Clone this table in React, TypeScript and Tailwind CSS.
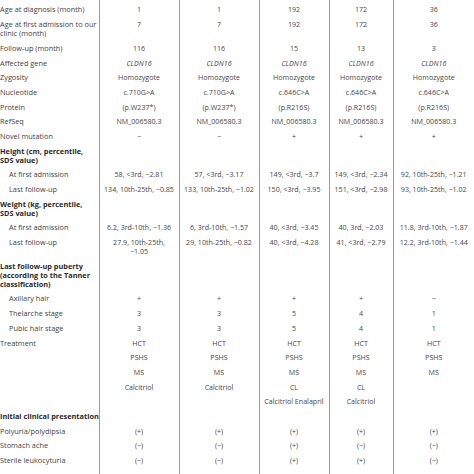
import type { ReactNode } from 'react'

interface IRow {
  label: ReactNode
  bold?: boolean
  indent?: boolean
  values: ReactNode[]
}

const empty = ['', '', '', '', '']

const rows: IRow[] = [
  { label: 'Age at diagnosis (month)', values: ['1', '1', '192', '172', '36'] },
  {
    label: (
      <>
        Age at first admission to our
        <br />
        clinic (month)
      </>
    ),
    values: ['7', '7', '192', '172', '36'],
  },
  { label: 'Follow-up (month)', values: ['116', '116', '15', '13', '3'] },
  {
    label: 'Affected gene',
    values: Array(5).fill(<i>CLDN16</i>),
  },
  { label: 'Zygosity', values: Array(5).fill('Homozygote') },
  {
    label: 'Nucleotide',
    values: ['c.710G>A', 'c.710G>A', 'c.646C>A', 'c.646C>A', 'c.646C>A'],
  },
  {
    label: 'Protein',
    values: ['(p.W237*)', '(p.W237*)', '(p.R216S)', '(p.R216S)', '(p.R216S)'],
  },
  { label: 'RefSeq', values: Array(5).fill('NM_006580.3') },
  { label: 'Novel mutation', values: ['\u2212', '\u2212', '+', '+', '+'] },
  {
    label: (
      <>
        Height (cm, percentile,
        <br />
        SDS value)
      </>
    ),
    bold: true,
    values: empty,
  },
  {
    label: 'At first admission',
    indent: true,
    values: [
      '58, <3rd, \u22122.81',
      '57, <3rd, \u22123.17',
      '149, <3rd, \u22123.7',
      '149, <3rd, \u22122.34',
      '92, 10th-25th, \u22121.21',
    ],
  },
  {
    label: 'Last follow-up',
    indent: true,
    values: [
      '134, 10th-25th, \u22120.85',
      '133, 10th-25th, \u22121.02',
      '150, <3rd, \u22123.95',
      '151, <3rd, \u22122.98',
      '93, 10th-25th, \u22121.02',
    ],
  },
  {
    label: (
      <>
        Weight (kg, percentile,
        <br />
        SDS value)
      </>
    ),
    bold: true,
    values: empty,
  },
  {
    label: 'At first admission',
    indent: true,
    values: [
      '6.2, 3rd-10th, \u22121.36',
      '6, 3rd-10th, \u22121.57',
      '40, <3rd, \u22123.45',
      '40, 3rd, \u22122.03',
      '11.8, 3rd-10th, \u22121.87',
    ],
  },
  {
    label: 'Last follow-up',
    indent: true,
    values: [
      <>
        27.9, 10th-25th,
        <br />
        {'\u22121.05'}
      </>,
      '29, 10th-25th, \u22120.82',
      '40, <3rd, \u22124.28',
      '41, <3rd, \u22122.79',
      '12.2, 3rd-10th, \u22121.44',
    ],
  },
  {
    label: (
      <>
        Last follow-up puberty
        <br />
        (according to the Tanner
        <br />
        classification)
      </>
    ),
    bold: true,
    values: empty,
  },
  { label: 'Axillary hair', indent: true, values: ['+', '+', '+', '+', '\u2212'] },
  { label: 'Thelarche stage', indent: true, values: ['3', '3', '5', '4', '1'] },
  { label: 'Pubic hair stage', indent: true, values: ['3', '3', '5', '4', '1'] },
  { label: 'Treatment', values: Array(5).fill('HCT') },
  { label: '', values: Array(5).fill('PSHS') },
  { label: '', values: Array(5).fill('MS') },
  { label: '', values: ['Calcitriol', 'Calcitriol', 'CL', 'CL', ''] },
  { label: '', values: ['', '', 'Calcitriol Enalapril', 'Calcitriol', ''] },
  { label: 'Initial clinical presentation', bold: true, values: empty },
  { label: 'Polyuria/polydipsia', values: Array(5).fill('(+)') },
  {
    label: 'Stomach ache',
    values: ['(\u2212)', '(\u2212)', '(+)', '(\u2212)', '(\u2212)'],
  },
  {
    label: 'Sterile leukocyturia',
    values: ['(\u2212)', '(\u2212)', '(+)', '(+)', '(\u2212)'],
  },
]

const cell = 'border-l border-[#9a9a9a] px-0 align-top text-center whitespace-nowrap'

export default function App() {
  return (
    <div
      className="w-[474px] h-[474px] overflow-hidden bg-white text-[7.1px] leading-[9px] text-[#474747]"
      style={{ fontFamily: '"Open Sans", "Liberation Sans", sans-serif' }}
    >
      <table className="table-fixed border-collapse w-[474px]">
        <colgroup>
          <col className="w-[99px]" />
          <col className="w-[80px]" />
          <col className="w-[80px]" />
          <col className="w-[70px]" />
          <col className="w-[64px]" />
          <col className="w-[81px]" />
        </colgroup>
        <tbody>
          <tr className="h-[2.6px]">
            <td />
            {empty.map((_, i) => (
              <td key={i} className={cell} />
            ))}
          </tr>
          {rows.map((row, r) => (
            <tr key={r}>
              <td
                className={`py-[2.85px] align-top text-left whitespace-nowrap text-[7.35px] ${
                  row.indent ? 'pl-[9px]' : 'pl-0'
                } ${row.bold ? 'font-bold text-[#2a2a2a]' : 'text-[#3f3f3f]'}`}
              >
                {row.label}
              </td>
              {row.values.map((v, i) => (
                <td key={i} className={`${cell} py-[2.85px]`}>
                  {v}
                </td>
              ))}
            </tr>
          ))}
          <tr className="h-[10px]">
            <td />
            {empty.map((_, i) => (
              <td key={i} className={cell} />
            ))}
          </tr>
        </tbody>
      </table>
    </div>
  )
}
